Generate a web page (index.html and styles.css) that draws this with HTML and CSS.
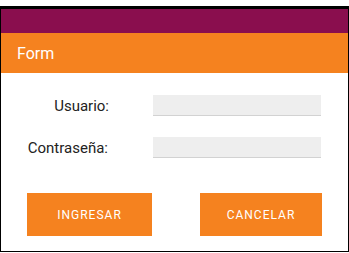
FILE: index.html
```html
<!DOCTYPE html>
<html lang="es">
  <head>
    <meta charset="UTF-8" />
    <meta name="viewport" content="width=device-width, initial-scale=1.0" />
    <title>Form</title>
    <link rel="stylesheet" href="styles.css">
  </head>
  <body>
    <div class="frame">
      <div class="topbar"></div>
      <div class="header">Form</div>
      <form action="" method="POST" class="my-form">
        <div class="fields">
          <label for="usuario">Usuario:</label>
          <input type="text" id="usuario" name="usuario" />
          <label for="clave" class="label-long">Contraseña:</label>
          <input type="password" id="clave" name="clave" />
        </div>
        <div class="actions">
          <button class="btn btn-ok" type="submit">Ingresar</button>
          <button class="btn btn-cancel" type="reset">Cancelar</button>
        </div>
      </form>
    </div>
  </body>
</html>
```
FILE: styles.css
```css
*, *:before, *:after {
  box-sizing: border-box;
}
body {
  margin: 0;
  background: #fff;
  font-family: Roboto, "Liberation Sans", sans-serif;
}
.frame {
  margin-top: 6px;
  width: 349px;
  height: 246px;
  border: 1px solid #000;
  border-top-width: 3px;
}
.topbar {
  height: 24px;
  background-color: #8a0e4e;
}
.header {
  height: 40px;
  padding-left: 16px;
  display: flex;
  align-items: center;
  background-color: #f5821f;
  color: #fff;
  font-size: 16px;
}
.fields {
  display: grid;
  grid-template-columns: 109px 168px;
  grid-auto-rows: 21px;
  column-gap: 43px;
  row-gap: 21px;
  padding-top: 22px;
}
.fields label {
  text-align: right;
  align-self: center;
  font-size: 15px;
  color: #222;
  padding-right: 1px;
}
.fields .label-long {
  padding-right: 2px;
}
.fields input {
  height: 21px;
  border: 0;
  border-bottom: 1px solid #d2d2d2;
  background: #eee;
  outline: none;
}
.actions {
  display: flex;
  gap: 48px;
  margin-top: 35px;
  padding-left: 26px;
}
.btn {
  height: 43px;
  border: 0;
  background-color: #f5821f;
  color: #fff;
  font-family: Roboto, "Liberation Sans", sans-serif;
  font-size: 12px;
  letter-spacing: 1px;
  text-transform: uppercase;
  cursor: pointer;
}
.btn-ok {
  width: 125px;
}
.btn-cancel {
  width: 122px;
}
```
